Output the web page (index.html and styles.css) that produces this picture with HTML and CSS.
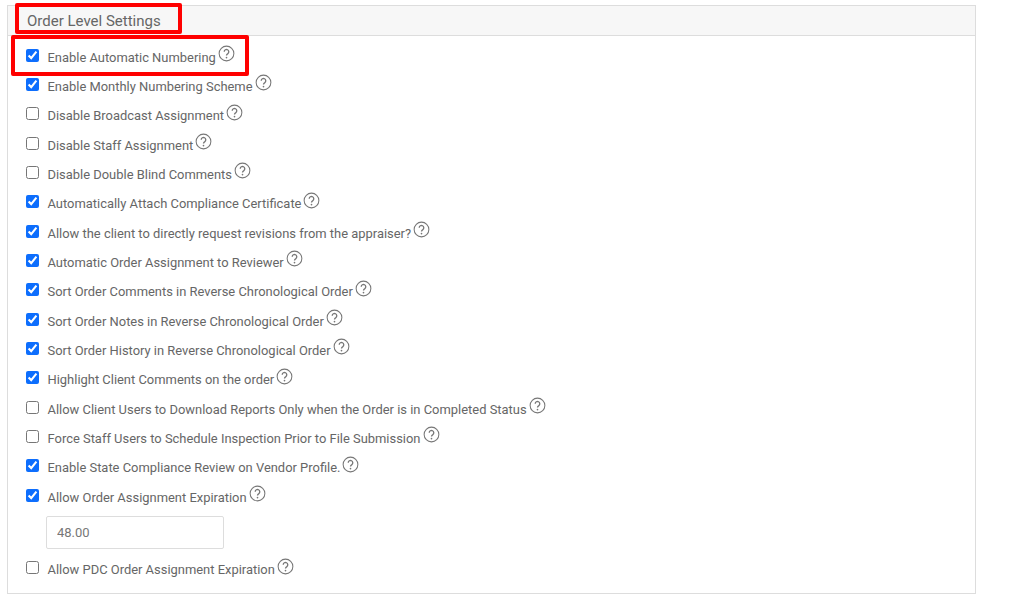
FILE: index.html
```html
<!DOCTYPE html>
<html lang="en">
<head>
    <meta charset="UTF-8">
    <title>Order Level Settings</title>
    <link rel="stylesheet" href="styles.css">
</head>
<body>
    <svg width="0" height="0" class="defs">
        <symbol id="help" viewBox="0 0 18 18">
            <circle cx="9" cy="9" r="7.8" fill="none" stroke="#777" stroke-width="1.1"/>
            <path d="M6.6 7.1a2.4 2.4 0 1 1 3.8 2c-.9.6-1.4 1-1.4 2.1" fill="none" stroke="#777" stroke-width="1.4"/>
            <circle cx="9" cy="13.3" r=".9" fill="#777"/>
        </symbol>
    </svg>
    <div class="panel">
        <div class="panel-heading">Order Level Settings</div>
        <div class="panel-body">
            <label class="row"><input type="checkbox" checked><span>Enable Automatic Numbering</span><svg class="help"><use href="#help"/></svg></label>
            <label class="row"><input type="checkbox" checked><span>Enable Monthly Numbering Scheme</span><svg class="help"><use href="#help"/></svg></label>
            <label class="row"><input type="checkbox"><span>Disable Broadcast Assignment</span><svg class="help"><use href="#help"/></svg></label>
            <label class="row"><input type="checkbox"><span>Disable Staff Assignment</span><svg class="help"><use href="#help"/></svg></label>
            <label class="row"><input type="checkbox"><span>Disable Double Blind Comments</span><svg class="help"><use href="#help"/></svg></label>
            <label class="row"><input type="checkbox" checked><span>Automatically Attach Compliance Certificate</span><svg class="help"><use href="#help"/></svg></label>
            <label class="row"><input type="checkbox" checked><span>Allow the client to directly request revisions from the appraiser?</span><svg class="help"><use href="#help"/></svg></label>
            <label class="row"><input type="checkbox" checked><span>Automatic Order Assignment to Reviewer</span><svg class="help"><use href="#help"/></svg></label>
            <label class="row"><input type="checkbox" checked><span>Sort Order Comments in Reverse Chronological Order</span><svg class="help"><use href="#help"/></svg></label>
            <label class="row"><input type="checkbox" checked><span>Sort Order Notes in Reverse Chronological Order</span><svg class="help"><use href="#help"/></svg></label>
            <label class="row"><input type="checkbox" checked><span>Sort Order History in Reverse Chronological Order</span><svg class="help"><use href="#help"/></svg></label>
            <label class="row"><input type="checkbox" checked><span>Highlight Client Comments on the order</span><svg class="help"><use href="#help"/></svg></label>
            <label class="row"><input type="checkbox"><span>Allow Client Users to Download Reports Only when the Order is in Completed Status</span><svg class="help"><use href="#help"/></svg></label>
            <label class="row"><input type="checkbox"><span>Force Staff Users to Schedule Inspection Prior to File Submission</span><svg class="help"><use href="#help"/></svg></label>
            <label class="row"><input type="checkbox" checked><span>Enable State Compliance Review on Vendor Profile.</span><svg class="help"><use href="#help"/></svg></label>
            <label class="row"><input type="checkbox" checked><span>Allow Order Assignment Expiration</span><svg class="help"><use href="#help"/></svg></label>
            <input class="hours" type="text" value="48.00">
            <label class="row"><input type="checkbox"><span>Allow PDC Order Assignment Expiration</span><svg class="help"><use href="#help"/></svg></label>
        </div>
    </div>
    <div class="mark mark-heading"></div>
    <div class="mark mark-row"></div>
</body>
</html>
```

FILE: styles.css
```css
html, body {
    margin: 0;
    height: 100%;
    overflow: hidden;
    background: #fff;
}
body {
    position: relative;
    padding: 5px 48px 0 7px;
    box-sizing: border-box;
    font-family: Roboto, sans-serif;
    color: #666;
}
.defs {
    position: absolute;
}
.panel {
    border: 1px solid #ddd;
    height: 589px;
    box-sizing: border-box;
}
.panel-heading {
    height: 29px;
    line-height: 30px;
    padding-left: 19px;
    background: #f7f7f7;
    border-bottom: 1px solid #ddd;
    font-size: 15px;
}
.panel-body {
    display: flex;
    flex-direction: column;
    align-items: flex-start;
    padding: 6.6px 0 0 18px;
}
.row {
    display: flex;
    align-items: center;
    height: 29.33px;
    font-size: 12.93px;
}
.row input {
    width: 13px;
    height: 13px;
    margin: -4.2px 8.5px 0 0;
    accent-color: #0d6efd;
}
.help {
    width: 17px;
    height: 17px;
    margin: -7.2px 0 0 2px;
}
.hours {
    width: 178px;
    height: 33px;
    box-sizing: border-box;
    margin: 4.4px 0 6px 20px;
    padding: 0 10px;
    border: 1px solid #ddd;
    border-radius: 2px;
    font: 13px Roboto, sans-serif;
    color: #777;
}
.mark {
    position: absolute;
    border: 4px solid #f00;
    box-sizing: border-box;
    border-radius: 2px;
}
.mark-heading {
    left: 15px;
    top: 3px;
    width: 167px;
    height: 31px;
}
.mark-row {
    left: 11px;
    top: 35px;
    width: 238px;
    height: 41px;
}
```
